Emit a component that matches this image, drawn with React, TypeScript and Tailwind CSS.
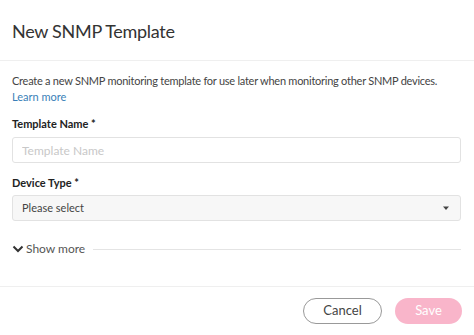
import React from "react";

function Caret() {
  return (
    <svg width="8" height="5" viewBox="0 0 8 5" className="text-[#444]">
      <path d="M1 0.5 L7 0.5 L4 4 Z" fill="currentColor" />
    </svg>
  );
}

function Chevron() {
  return (
    <svg width="12" height="8" viewBox="0 0 12 8" className="text-[#333]">
      <path d="M1.5 1.5 L6 6 L10.5 1.5" fill="none" stroke="currentColor" strokeWidth="2" />
    </svg>
  );
}

export default function App() {
  return (
    <div className="w-[474px] h-[335px] overflow-hidden bg-white text-[#333] font-['Lato',sans-serif] flex flex-col">
      {/* Header */}
      <div className="shrink-0 h-[61px] flex items-center px-3 pt-[2px] border-b border-[#efefef]">
        <h1 className="text-[18px] leading-[24px] text-[#333] tracking-[-0.3px]">New SNMP Template</h1>
      </div>

      {/* Body */}
      <div className="shrink-0 h-[225px] px-3 pt-[12px]">
        <p className="text-[11px] leading-[16px] text-[#444] tracking-[-0.25px] whitespace-nowrap">
          Create a new SNMP monitoring template for use later when monitoring other SNMP devices.
          <br />
          <a className="text-[#3a7fb8] tracking-normal">Learn more</a>
        </p>

        <label className="block mt-[11px] text-[11px] font-bold text-[#222] leading-[16px]">
          Template Name *
        </label>
        <input
          className="block mt-[5px] w-[449px] h-[26px] rounded-[3px] border border-[#e2e2e2] px-[9px] text-[12px] placeholder:text-[#c8c8c8] outline-none"
          placeholder="Template Name"
        />

        <label className="block mt-[12px] text-[11px] font-bold text-[#222] leading-[16px]">
          Device Type *
        </label>
        <div className="mt-[4px] w-[449px] h-[26px] rounded-[3px] border border-[#e2e2e2] bg-[#f7f7f7] pl-[9px] pr-[10px] flex items-center justify-between">
          <span className="text-[11px] text-[#444]">Please select</span>
          <Caret />
        </div>

        <div className="mt-[20px] w-[449px] h-[16px] flex items-center">
          <Chevron />
          <span className="ml-[2px] text-[12px] text-[#555] whitespace-nowrap">Show more</span>
          <div className="ml-[8px] flex-1 h-px bg-[#e4e4e4]" />
        </div>
      </div>

      {/* Footer */}
      <div className="shrink-0 flex-1 border-t border-[#efefef] flex items-start justify-end gap-[13px] px-3 pt-[11px]">
        <button className="w-[79px] h-[26px] rounded-full border border-[#999] text-[13px] text-[#444] bg-white">
          Cancel
        </button>
        <button className="w-[67px] h-[26px] rounded-full bg-[#f9b5ca] text-[13px] text-white">
          Save
        </button>
      </div>
    </div>
  );
}
